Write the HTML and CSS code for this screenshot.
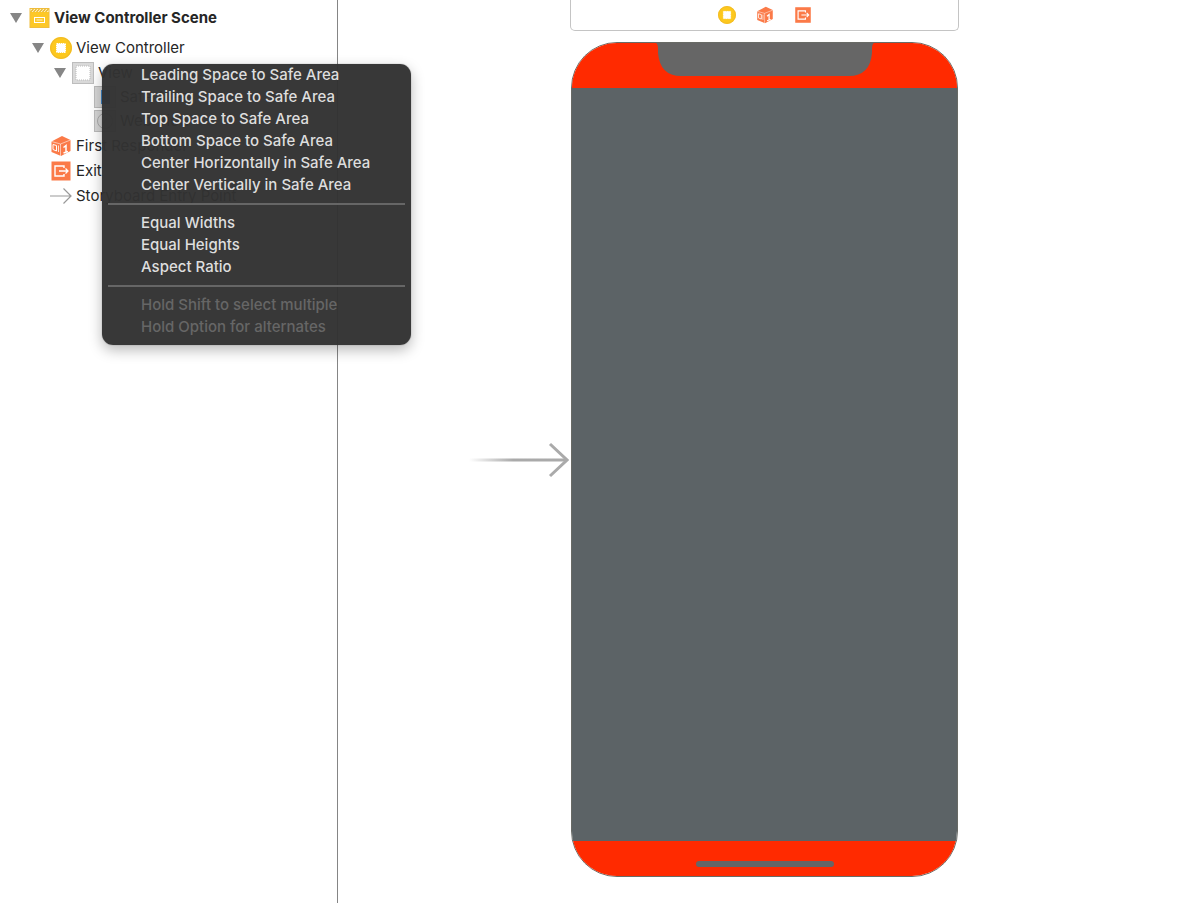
FILE: index.html
```
<!DOCTYPE html>
<html lang="en">
<head>
<meta charset="utf-8">
<title>View Controller Scene</title>
<link rel="stylesheet" href="styles.css">
</head>
<body>
<svg class="symbols" aria-hidden="true">
  <symbol id="triangle" viewBox="0 0 12 10"><path d="M0 0H12L6 10Z" fill="#868686"/></symbol>
  <symbol id="controller" viewBox="0 0 22 22">
    <circle cx="11" cy="11" r="11" fill="#fdc81d"/><circle cx="11" cy="11" r="10.300" fill="none" stroke="#efb92a" stroke-width="1"/>
    <rect x="6" y="6" width="10" height="10" fill="#fff"/><rect x="6" y="6" width="10" height="10" fill="none" stroke="#fdc81d" stroke-dasharray="1 1"/>
  </symbol>
  <symbol id="cube" viewBox="0 0 22 22">
    <path d="M12 1L20.500 5V16L11 21L1.500 17V6.500Z" fill="#fb7a48"/>
    <path d="M1.500 6.500L10.500 9L20.500 5M10.500 9V21" fill="none" stroke="#fff" stroke-width=".7" opacity=".8"/>
    <path d="M3 9.500L6.500 10.500V16L3 14.500Z" fill="none" stroke="#fff" stroke-width="1"/><path d="M8.500 10.500V17" stroke="#fff" stroke-width=".8"/>
    <path d="M13.500 12.500L16 10.500V17.500M13.500 18L18 16.500" fill="none" stroke="#fff" stroke-width="1.500"/>
  </symbol>
  <symbol id="exit" viewBox="0 0 22 22">
    <rect x="1.500" y="1.500" width="19" height="19" fill="#fb7a48"/>
    <path d="M14 8V6H5V16H14V14" fill="none" stroke="#fff" stroke-width="1.400"/>
    <path d="M9 11H18M15.500 8.500L18 11L15.500 13.500" fill="none" stroke="#fff" stroke-width="1.300"/>
  </symbol>
</svg>
<div class="editor">
  <nav class="outline" aria-label="Document outline">
    <ul class="tree">
      <li class="row scene">
        <button class="toggle" aria-label="Collapse scene"><svg><use href="#triangle"/></svg></button>
        <svg class="icon" viewBox="0 0 22 22"><rect x="2" y="1.500" width="19" height="19" fill="#fdc827" stroke="#efbd3e"/><path d="M2.500 2H20.500V5H2.500Z" fill="#fff4ce"/><path d="M2.500 5L5.500 2M5.500 5L8.500 2M8.500 5L11.500 2M11.500 5L14.500 2M14.500 5L17.500 2M17.500 5L20.500 2" stroke="#e9b528" stroke-width="1.200"/><rect x="6.500" y="10.500" width="10" height="5" fill="none" stroke="#fff"/><path d="M8.500 13H14.500" stroke="#fff" stroke-width=".8"/></svg>
        <span>View Controller Scene</span>
      </li>
      <li class="row level-1">
        <button class="toggle" aria-label="Collapse controller"><svg><use href="#triangle"/></svg></button>
        <svg class="icon"><use href="#controller"/></svg>
        <span>View Controller</span>
      </li>
      <li class="row level-2">
        <button class="toggle" aria-label="Collapse view"><svg><use href="#triangle"/></svg></button>
        <svg class="icon" viewBox="0 0 22 22"><rect x=".5" y=".5" width="21" height="21" fill="#d9d9d9" stroke="#bdbdbd"/><rect x="4" y="4" width="14" height="14" fill="#fff"/><rect x="4" y="4" width="14" height="14" fill="none" stroke="#bbb" stroke-dasharray="1 1"/></svg>
        <span>View</span>
      </li>
      <li class="row level-3">
        <svg class="icon" viewBox="0 0 22 22"><rect x=".5" y=".5" width="21" height="21" fill="#d6d6d6" stroke="#bbb"/><rect x="7" y="4" width="9" height="14" fill="#3f86c8"/></svg>
        <span>Safe Area</span>
      </li>
      <li class="row level-3">
        <svg class="icon" viewBox="0 0 22 22"><rect x=".5" y=".5" width="21" height="21" fill="#d6d6d6" stroke="#bbb"/><circle cx="11" cy="11" r="7.500" fill="none" stroke="#aaa"/><path d="M9 14L13 8" stroke="#aaa"/></svg>
        <span>Web View</span>
      </li>
      <li class="row level-1 leaf">
        <svg class="icon"><use href="#cube"/></svg>
        <span>First Responder</span>
      </li>
      <li class="row level-1 leaf">
        <svg class="icon"><use href="#exit"/></svg>
        <span>Exit</span>
      </li>
      <li class="row level-1 leaf">
        <svg class="icon" viewBox="0 0 22 22"><path d="M0 11H21M13.500 3.500L21 11L13.500 18.500" fill="none" stroke="#999" stroke-width="1.200"/></svg>
        <span>Storyboard Entry Point</span>
      </li>
    </ul>
  </nav>
  <main class="canvas">
    <div class="stage">
      <div class="dock">
        <button aria-label="View Controller"><svg><use href="#controller"/></svg></button>
        <button aria-label="First Responder"><svg><use href="#cube"/></svg></button>
        <button aria-label="Exit"><svg><use href="#exit"/></svg></button>
      </div>
      <div class="device">
        <svg class="entry" viewBox="0 0 100 36" aria-hidden="true"><defs><linearGradient id="fade"><stop offset="0" stop-color="#aaa" stop-opacity="0"/><stop offset=".45" stop-color="#aaa"/></linearGradient></defs><rect x="0" y="16.500" width="98" height="3" fill="url(#fade)"/><path d="M81 2L98 18L81 34" fill="none" stroke="#aaa" stroke-width="3"/></svg>
        <div class="phone">
          <div class="status"><svg class="notch" viewBox="0 0 218 33"><path d="M0 0H218Q216 1 216 6V10Q214 33 193 33H25Q4 33 2 10V6Q2 1 0 0Z" fill="#666"/></svg></div>
          <div class="screen"></div>
          <div class="footer"><div class="home"></div></div>
        </div>
      </div>
    </div>
  </main>
</div>
<div class="menu" role="menu">
  <button role="menuitem">Leading Space to Safe Area</button>
  <button role="menuitem">Trailing Space to Safe Area</button>
  <button role="menuitem">Top Space to Safe Area</button>
  <button role="menuitem">Bottom Space to Safe Area</button>
  <button role="menuitem">Center Horizontally in Safe Area</button>
  <button role="menuitem">Center Vertically in Safe Area</button>
  <hr>
  <button role="menuitem">Equal Widths</button>
  <button role="menuitem">Equal Heights</button>
  <button role="menuitem">Aspect Ratio</button>
  <hr>
  <button role="menuitem" disabled>Hold Shift to select multiple</button>
  <button role="menuitem" disabled>Hold Option for alternates</button>
</div>
</body>
</html>
```
FILE: styles.css
```
* { box-sizing: border-box; }
body { margin: 0; background: #fff; color: #262626; font: 15px/24px Inter, sans-serif; }
button { margin: 0; padding: 0; border: 0; background: none; font: inherit; color: inherit; }
svg { display: block; }
.symbols { position: absolute; width: 0; height: 0; }
.editor { display: flex; min-height: 100vh; }

.outline { flex: none; width: 338px; border-right: 1px solid #858585; }
.tree { list-style: none; margin: 0; padding: 0; }
.row { display: flex; align-items: center; gap: 4px; height: 25px; white-space: nowrap; }
.scene { height: 35px; padding-left: 10px; font-weight: 700; }
.level-1 { padding-left: 32px; }
.level-2 { padding-left: 54px; }
.level-3 { height: 24px; padding-left: 94px; }
.leaf { padding-left: 50px; }
.toggle { width: 12px; margin-right: 2px; }
.toggle svg { width: 12px; height: 10px; }
.icon { flex: none; width: 22px; height: 22px; }

.canvas { flex: 1; padding-left: 232px; }
.stage { width: 389px; }
.dock { display: flex; justify-content: center; align-items: center; gap: 20px; height: 31px; padding-bottom: 1px; border: 1px solid #c4c4c4; border-top: 0; border-radius: 0 0 5px 5px; }
.dock svg { width: 18px; height: 18px; }
.device { position: relative; margin: 11px 1px 0; }
.entry { position: absolute; left: -102px; top: 400px; width: 100px; height: 36px; }
.phone { display: flex; flex-direction: column; height: 835px; overflow: hidden; border: 1px solid #696b66; border-radius: 46px; }
.status { display: flex; justify-content: center; height: 45px; background: #ff2a00; }
.notch { width: 218px; height: 33px; }
.screen { flex: 1; background: #5c6366; }
.footer { display: flex; justify-content: center; height: 35px; padding-top: 20px; background: #ff2a00; }
.home { width: 138px; height: 6px; border-radius: 3px; background: #666; }

.menu { position: absolute; left: 102px; top: 64px; width: 309px; padding-bottom: 7px; border-radius: 11px; background: rgba(50, 50, 50, 0.97); box-shadow: 0 0 1px rgba(0, 0, 0, 0.5), 0 5px 14px rgba(0, 0, 0, 0.28); color: #dedede; font-weight: 500; line-height: 22px; }
.menu button { display: block; width: 100%; height: 22px; padding-left: 39px; text-align: left; }
.menu button:disabled { color: #666; }
.menu hr { height: 2px; margin: 7px 6px; border: 0; background: #666; }
```
